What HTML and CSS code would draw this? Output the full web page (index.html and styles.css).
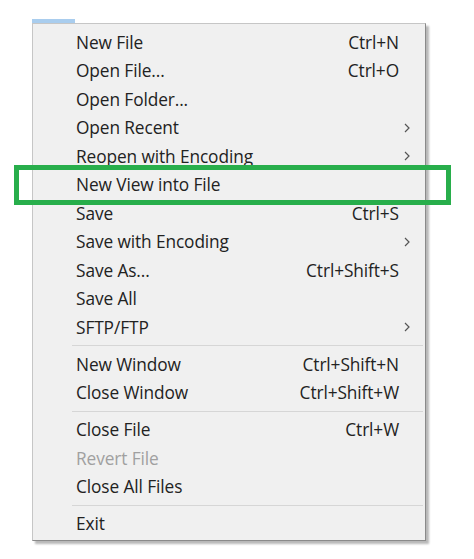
FILE: index.html
```html
<!DOCTYPE html>
<html>
<head>
<meta charset="utf-8">
<link rel="stylesheet" href="styles.css">
</head>
<body>
<div class="stage">
  <div class="tab"></div>
  <div class="menu">
    <div class="item"><span class="label">New File</span><span class="key">Ctrl+N</span><span class="sub"></span></div>
    <div class="item"><span class="label">Open File...</span><span class="key">Ctrl+O</span><span class="sub"></span></div>
    <div class="item"><span class="label">Open Folder...</span><span class="key"></span><span class="sub"></span></div>
    <div class="item"><span class="label">Open Recent</span><span class="key"></span><span class="sub"><svg viewBox="0 0 6 10" width="6" height="10"><path d="M1 1l4 4-4 4" fill="none" stroke="#555" stroke-width="1.2"/></svg></span></div>
    <div class="item"><span class="label">Reopen with Encoding</span><span class="key"></span><span class="sub"><svg viewBox="0 0 6 10" width="6" height="10"><path d="M1 1l4 4-4 4" fill="none" stroke="#555" stroke-width="1.2"/></svg></span></div>
    <div class="item"><span class="label">New View into File</span><span class="key"></span><span class="sub"></span></div>
    <div class="item"><span class="label">Save</span><span class="key">Ctrl+S</span><span class="sub"></span></div>
    <div class="item"><span class="label">Save with Encoding</span><span class="key"></span><span class="sub"><svg viewBox="0 0 6 10" width="6" height="10"><path d="M1 1l4 4-4 4" fill="none" stroke="#555" stroke-width="1.2"/></svg></span></div>
    <div class="item"><span class="label">Save As...</span><span class="key">Ctrl+Shift+S</span><span class="sub"></span></div>
    <div class="item"><span class="label">Save All</span><span class="key"></span><span class="sub"></span></div>
    <div class="item"><span class="label">SFTP/FTP</span><span class="key"></span><span class="sub"><svg viewBox="0 0 6 10" width="6" height="10"><path d="M1 1l4 4-4 4" fill="none" stroke="#555" stroke-width="1.2"/></svg></span></div>
    <div class="sep"></div>
    <div class="item"><span class="label">New Window</span><span class="key">Ctrl+Shift+N</span><span class="sub"></span></div>
    <div class="item"><span class="label">Close Window</span><span class="key">Ctrl+Shift+W</span><span class="sub"></span></div>
    <div class="sep"></div>
    <div class="item"><span class="label">Close File</span><span class="key">Ctrl+W</span><span class="sub"></span></div>
    <div class="item disabled"><span class="label">Revert File</span><span class="key"></span><span class="sub"></span></div>
    <div class="item"><span class="label">Close All Files</span><span class="key"></span><span class="sub"></span></div>
    <div class="sep"></div>
    <div class="item"><span class="label">Exit</span><span class="key"></span><span class="sub"></span></div>
  </div>
  <div class="highlight"></div>
</div>
</body>
</html>
```

FILE: styles.css
```css
html, body {
  margin: 0;
  padding: 0;
  background: #ffffff;
}
.stage {
  position: relative;
  width: 474px;
  height: 559px;
  padding: 19px 0 0 32px;
  box-sizing: border-box;
  font-family: "Open Sans", "Noto Sans", sans-serif;
}
.tab {
  width: 43px;
  height: 4px;
  background: #a9cdee;
}
.menu {
  width: 392px;
  background: #f0f0f0;
  border: 1px solid #c6c6c6;
  border-right-color: #8a8a8a;
  border-bottom-color: #8a8a8a;
  box-shadow: 3px 3px 2px rgba(0, 0, 0, 0.28);
  padding: 4px 0 2px 0;
}
.item {
  display: flex;
  align-items: center;
  height: 28.5px;
  padding: 0 15px 0 43px;
  font-size: 17.3px;
  letter-spacing: -0.1px;
  color: #222222;
}
.item.disabled {
  color: #a0a0a0;
}
.label {
  flex: 1;
  white-space: nowrap;
}
.key {
  white-space: nowrap;
}
.sub {
  width: 11px;
  display: flex;
  justify-content: flex-end;
  align-items: center;
}
.sub svg {
  display: block;
}
.sep {
  height: 1px;
  margin: 3.75px 2px 3.75px 39px;
  background: #d6d6d6;
}
.highlight {
  position: absolute;
  left: 14px;
  top: 165px;
  width: 437px;
  height: 40px;
  box-sizing: border-box;
  border: 5px solid #28ae4b;
}
```
